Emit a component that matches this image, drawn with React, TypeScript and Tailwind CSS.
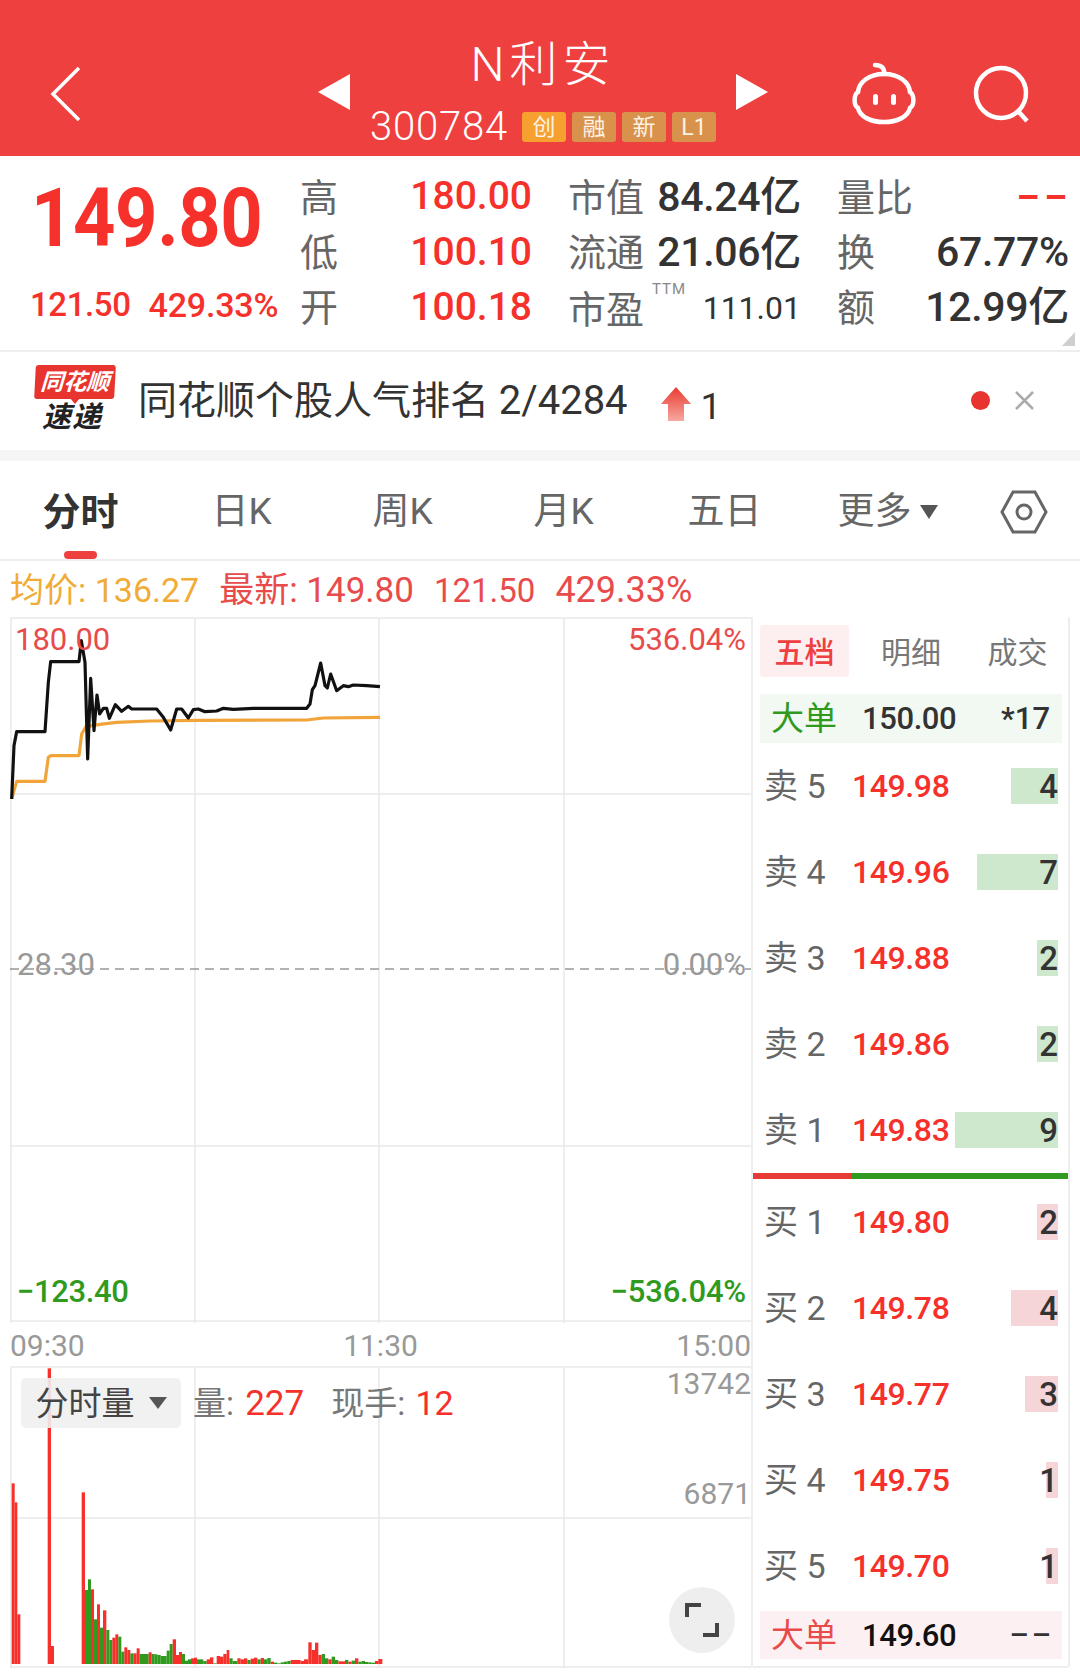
import React from 'react';

const FONT = 'font-["Roboto","Noto_Sans_CJK_SC",sans-serif]';

const blackLine = '35,540 42,380 50,338 135,338 145,190 152,128 237,128 244,65 255,130 263,420 272,178 282,335 291,228 299,285 310,268 320,268 328,298 346,257 365,277 385,262 395,270 470,270 490,295 512,333 530,270 545,270 565,297 580,272 595,270 615,278 650,276 670,268 700,271 760,268 920,268 930,255 937,212 945,200 962,132 975,200 982,207 992,165 1010,215 1030,200 1045,203 1060,198 1100,200 1140,203';
const avgLine = '35,540 50,487 135,487 145,415 152,410 237,410 245,345 258,323 300,316 350,310 450,306 600,304 920,303 970,297 1140,295';

// [x0, x1, top, red?]
const volumes: [number, number, number, number][] = [
  [35, 44, 430, 1], [44, 52, 487, 1], [52, 61, 823, 1], [143, 153, 85, 1], [153, 162, 918, 1], [245, 255, 457, 1],
  [255, 264, 750, 0], [264, 273, 718, 0], [273, 282, 748, 1], [282, 291, 838, 0], [291, 300, 793, 1], [300, 309, 863, 0],
  [309, 319, 811, 1], [319, 328, 870, 0], [328, 337, 900, 0], [337, 346, 893, 1], [346, 355, 883, 1], [355, 364, 890, 0],
  [364, 373, 935, 0], [373, 382, 922, 1], [382, 391, 930, 1], [391, 400, 940, 0], [400, 410, 940, 1], [410, 419, 925, 1],
  [419, 446, 942, 0], [446, 455, 937, 1], [455, 464, 942, 0], [464, 473, 943, 0], [473, 482, 945, 0], [482, 500, 948, 0],
  [500, 509, 932, 0], [509, 518, 912, 0], [518, 528, 898, 1], [528, 537, 945, 1], [537, 546, 936, 1], [546, 555, 942, 0],
  [555, 564, 962, 0], [564, 573, 958, 0], [573, 582, 955, 1], [582, 591, 953, 1], [591, 610, 958, 0], [610, 620, 963, 0],
  [620, 630, 958, 1], [630, 640, 952, 1], [640, 650, 970, 0], [650, 660, 948, 1], [660, 670, 950, 1], [670, 680, 942, 1],
  [680, 688, 930, 1], [688, 698, 955, 0], [698, 712, 963, 0], [712, 722, 955, 1], [722, 732, 958, 1], [732, 742, 955, 1],
  [742, 752, 960, 0], [752, 762, 956, 1], [762, 772, 953, 1], [772, 782, 958, 0], [782, 792, 954, 1], [792, 802, 958, 0],
  [802, 812, 954, 0], [812, 822, 965, 1], [822, 832, 968, 0], [832, 842, 970, 0], [842, 852, 967, 0], [852, 862, 965, 0],
  [862, 872, 963, 0], [872, 902, 960, 1], [902, 912, 963, 1], [912, 925, 958, 1], [925, 935, 907, 1], [935, 945, 930, 1],
  [945, 955, 908, 1], [955, 965, 945, 1], [965, 975, 942, 0], [975, 985, 955, 0], [985, 995, 958, 1], [995, 1005, 950, 0],
  [1005, 1015, 960, 0], [1015, 1035, 964, 1], [1035, 1045, 960, 0], [1045, 1055, 965, 1], [1055, 1065, 962, 0],
  [1065, 1075, 955, 1], [1075, 1085, 965, 0], [1085, 1095, 963, 0], [1095, 1105, 966, 0], [1105, 1115, 967, 0],
  [1115, 1125, 968, 0], [1125, 1135, 963, 1], [1135, 1147, 957, 1],
];

const sells = [
  { label: '卖 5', price: '149.98', qty: '4', bar: 47 },
  { label: '卖 4', price: '149.96', qty: '7', bar: 81 },
  { label: '卖 3', price: '149.88', qty: '2', bar: 21 },
  { label: '卖 2', price: '149.86', qty: '2', bar: 21 },
  { label: '卖 1', price: '149.83', qty: '9', bar: 103 },
];
const buys = [
  { label: '买 1', price: '149.80', qty: '2', bar: 21 },
  { label: '买 2', price: '149.78', qty: '4', bar: 47 },
  { label: '买 3', price: '149.77', qty: '3', bar: 33 },
  { label: '买 4', price: '149.75', qty: '1', bar: 12 },
  { label: '买 5', price: '149.70', qty: '1', bar: 12 },
];

function Label({ children }: { children: React.ReactNode }) {
  return <span className="text-[38px] leading-none text-[#666]">{children}</span>;
}

function Badge({ text, first }: { text: string; first?: boolean }) {
  return (
    <span className={`flex h-[30px] w-[44px] items-center justify-center rounded-[3px] text-[23px] leading-none text-[#fdf3e4] ${first ? 'bg-[#f5a02f]' : 'bg-[#d8924c]'}`}>
      {text}
    </span>
  );
}

function BookRow({ row, barColor }: { row: { label: string; price: string; qty: string; bar: number }; barColor: string }) {
  return (
    <div className="relative flex h-[86px] items-center pl-[11px]">
      <span className="w-[88px] text-[34px] leading-none text-[#666]">{row.label}</span>
      <span className="text-[32px] font-medium leading-none tracking-[-0.4px] text-[#f6302a]">{row.price}</span>
      <div className={`absolute right-[10px] top-[25px] h-[36px] ${barColor}`} style={{ width: row.bar }} />
      <span className="absolute right-[10px] text-[33px] font-medium leading-none text-[#333]">{row.qty}</span>
    </div>
  );
}

export default function App() {
  return (
    <div className={`h-[1678px] w-[1080px] overflow-hidden bg-white ${FONT}`}>
      {/* header */}
      <div className="flex h-[156px] bg-[#ef4040] text-white">
        <div className="flex w-[318px] items-start pl-[50px] pt-[66px]">
          <svg width="32" height="56" viewBox="0 0 32 56" fill="none" stroke="white" strokeWidth="3.5">
            <path d="M29 2 L3 28 L29 54" />
          </svg>
        </div>
        <div className="flex w-[450px] justify-between">
          <svg className="mt-[74px]" width="32" height="36" viewBox="0 0 32 36" fill="white"><path d="M32 0 V36 L0 18 Z" /></svg>
          <div className="flex flex-col items-center pt-[38px]">
            <div className="flex h-[54px] items-center text-[48px] font-light leading-none tracking-[5px]">N利安</div>
            <div className="mt-[16px] flex h-[38px] items-center">
              <span className="mr-[14px] text-[40px] font-light leading-none tracking-[0.8px]">300784</span>
              <div className="flex gap-[6px]">
                <Badge text="创" first />
                <Badge text="融" />
                <Badge text="新" />
                <Badge text="L1" />
              </div>
            </div>
          </div>
          <svg className="mt-[74px]" width="32" height="36" viewBox="0 0 32 36" fill="white"><path d="M0 0 V36 L32 18 Z" /></svg>
        </div>
        <div className="flex items-start pl-[83px] pt-[62px]">
          <svg width="66" height="64" viewBox="0 0 66 64" fill="none" stroke="white" strokeWidth="4.5">
            <path d="M24 3 C30 3 34 6 33 12" strokeLinecap="round" />
            <path d="M33 12 C48 12 58 20 59 30 C63 32 64 43 59 46 C57 55 46 60 33 60 C20 60 9 55 7 46 C2 43 3 32 7 30 C8 20 18 12 33 12 Z" />
            <rect x="22" y="32" width="5" height="11" rx="2.5" fill="white" stroke="none" />
            <rect x="40" y="32" width="5" height="11" rx="2.5" fill="white" stroke="none" />
          </svg>
          <svg className="ml-[55px] mt-[3px]" width="60" height="60" viewBox="0 0 60 60" fill="none" stroke="white" strokeWidth="4.5">
            <circle cx="29" cy="28" r="25" />
            <path d="M46 46 L55 56" />
          </svg>
        </div>
      </div>

      {/* quote */}
      <div className="relative flex h-[196px] border-b-2 border-[#eeeeee] pt-[14px]">
        <div className="flex w-[300px] flex-col pl-[30px]">
          <div className="ml-[1px] mt-[11px] origin-center scale-y-110 text-[74px] font-bold leading-[74px] tracking-[-0.4px] text-[#f6302a]">149.80</div>
          <div className="mt-[33px] flex gap-[20px] text-[33px] font-medium leading-none tracking-[-0.4px] text-[#f6302a]">
            <span>121.50</span>
            <span className="-ml-[2px] text-[34px] tracking-[-0.2px]">429.33%</span>
          </div>
        </div>
        <div className="grid h-[165px] grid-cols-[232px_233px_232px] grid-rows-3 gap-x-[36px]">
          <div className="flex items-center justify-between"><Label>高</Label><span className="-translate-y-px text-[39px] font-medium leading-none text-[#f6302a]">180.00</span></div>
          <div className="flex items-center justify-between"><Label>市值</Label><span className="text-[41px] font-medium leading-none tracking-[-0.3px] text-[#333]">84.24亿</span></div>
          <div className="flex items-center justify-between"><Label>量比</Label><span className="-mr-[3px] text-[36px] font-bold leading-none tracking-[5px] text-[#f6302a]">––</span></div>
          <div className="flex items-center justify-between"><Label>低</Label><span className="text-[39px] font-medium leading-none text-[#f6302a]">100.10</span></div>
          <div className="flex items-center justify-between"><Label>流通</Label><span className="text-[41px] font-medium leading-none tracking-[-0.3px] text-[#333]">21.06亿</span></div>
          <div className="flex items-center justify-between"><Label>换</Label><span className="text-[41px] font-medium leading-none tracking-[-0.3px] text-[#333]">67.77%</span></div>
          <div className="flex items-center justify-between"><Label>开</Label><span className="text-[39px] font-medium leading-none text-[#f6302a]">100.18</span></div>
          <div className="flex items-center justify-between">
            <div className="flex items-start">
              <span className="mt-[6px]"><Label>市盈</Label></span>
              <span className="ml-[8px] mt-[-3px] text-[15px] leading-none tracking-[1px] text-[#888]">TTM</span>
            </div>
            <span className="text-[32px] leading-none text-[#333]">111.01</span>
          </div>
          <div className="flex items-center justify-between"><Label>额</Label><span className="text-[41px] font-medium leading-none tracking-[-0.3px] text-[#333]">12.99亿</span></div>
        </div>
        <svg className="absolute bottom-[4px] right-[5px]" width="13" height="14" viewBox="0 0 13 14" fill="#cfcfcf"><path d="M13 0 V14 H0 Z" /></svg>
      </div>

      {/* rank */}
      <div className="flex h-[98px] items-center">
        <div className="relative ml-[34px] flex h-[72px] w-[82px] flex-col items-center">
          <div className="flex h-[34px] w-[80px] -skew-x-3 items-center justify-center rounded-[3px] bg-[#e8342e] text-[23px] font-bold italic leading-none text-white">同花顺</div>
          <svg className="-mt-[1px]" width="10" height="6" viewBox="0 0 10 6" fill="#e8342e"><path d="M0 0 H10 L5 6 Z" /></svg>
          <div className="-ml-[6px] -mt-[3px] text-[29px] font-bold italic leading-[32px] tracking-[1px] text-[#222]">速递</div>
        </div>
        <span className="ml-[22px] text-[39px] leading-none text-[#333]">同花顺个股人气排名 <span className="text-[40px]">2/4284</span></span>
        <svg className="ml-[33px] mt-[6px]" width="30" height="34" viewBox="0 0 30 34">
          <defs>
            <linearGradient id="rankUp" x1="0" y1="0" x2="0" y2="1">
              <stop offset="0%" stopColor="#ea3a30" />
              <stop offset="100%" stopColor="#f7a8a0" />
            </linearGradient>
          </defs>
          <path d="M15 0 L30 17 H23 V34 H7 V17 H0 Z" fill="url(#rankUp)" />
        </svg>
        <span className="ml-[10px] mt-[10px] text-[37px] leading-none text-[#333]">1</span>
        <div className="ml-auto mr-[45px] flex -translate-y-px items-center gap-[24px]">
          <div className="h-[19px] w-[19px] rounded-full bg-[#e8342e]" />
          <svg width="21" height="21" viewBox="0 0 21 21" stroke="#aaa" strokeWidth="2.5"><path d="M2 2 L19 19 M19 2 L2 19" /></svg>
        </div>
      </div>
      <div className="h-[11px] bg-[#f5f5f5]" />

      {/* tabs */}
      <div className="relative flex h-[100px] items-center border-b-2 border-[#eeeeee] pt-[3px] text-[37px] leading-none text-[#666]">
        <div className="flex w-[161px] justify-center text-[38px] font-bold text-[#333]">分时</div>
        <div className="flex w-[161px] justify-center">日K</div>
        <div className="flex w-[161px] justify-center">周K</div>
        <div className="flex w-[161px] justify-center">月K</div>
        <div className="flex w-[161px] justify-center">五日</div>
        <div className="flex w-[161px] items-center justify-center pl-[4px]">
          更多
          <svg className="ml-[8px]" width="18" height="14" viewBox="0 0 18 14" fill="#555"><path d="M0 0 H18 L9 14 Z" /></svg>
        </div>
        <div className="flex flex-1 justify-center pl-[2px]">
          <svg width="48" height="44" viewBox="0 0 48 44" fill="none" stroke="#666" strokeWidth="3">
            <path d="M13 2 H35 L46 22 L35 42 H13 L2 22 Z" />
            <circle cx="24" cy="22" r="7" />
          </svg>
        </div>
        <div className="absolute bottom-0 left-[64px] h-[8px] w-[33px] rounded-[4px] bg-[#ef4040]" />
      </div>

      {/* info */}
      <div className="flex h-[56px] items-center pl-[10px] pt-[2px] leading-none text-[#e84b4b]">
        <span className="text-[34px] text-[#f0ac36]">均价: 136.27</span>
        <span className="ml-[20px] text-[35px]">最新: 149.80</span>
        <span className="ml-[20px] text-[33px]">121.50</span>
        <span className="ml-[20px] text-[36px]">429.33%</span>
      </div>

      {/* chart + order book */}
      <div className="flex">
        <div className="w-[751px] pl-[10px]">
          <div className="relative h-[704px] w-[741px] border-t-2 border-[#eeeeee]">
            <svg className="absolute left-0 top-0" width="741" height="704" fill="none" stroke="#e9e9e9" strokeWidth="1.5">
              <path d="M1 0 V704 M185 0 V704 M369 0 V704 M554 0 V704 M0 175 H741 M0 527 H741 M0 702 H741" />
              <path d="M0 350 H741" stroke="#666" strokeDasharray="9 6" strokeWidth="1.2" />
            </svg>
            <svg className="absolute left-[-10px] top-0" width="400" height="180" viewBox="0 0 1200 540" fill="none" strokeWidth="9.5" strokeLinejoin="round">
              <polyline points={avgLine} stroke="#f0a43a" />
              <polyline points={blackLine} stroke="#111" />
            </svg>
            <span className="absolute left-[5px] top-[3px] text-[31px] leading-[36px] text-[#e84b4b]">180.00</span>
            <span className="absolute right-[5px] top-[3px] text-[31px] leading-[36px] text-[#e84b4b]">536.04%</span>
            <span className="absolute left-[7px] top-[328px] text-[31px] leading-[36px] text-[#999]">28.30</span>
            <span className="absolute right-[5px] top-[328px] text-[31px] leading-[36px] text-[#999]">0.00%</span>
            <span className="absolute left-[7px] top-[655px] text-[31px] font-medium leading-[36px] tracking-[-0.4px] text-[#2f9a1e]">−123.40</span>
            <span className="absolute right-[5px] top-[655px] text-[31px] font-medium leading-[36px] tracking-[-0.2px] text-[#2f9a1e]">−536.04%</span>
          </div>
          <div className="flex h-[45px] w-[741px] items-center justify-between pt-[5px] text-[30px] leading-none text-[#999]">
            <span>09:30</span>
            <span>11:30</span>
            <span>15:00</span>
          </div>
          <div className="relative h-[302px] w-[741px] border-t-2 border-[#eeeeee]">
            <svg className="absolute left-0 top-0" width="741" height="302" fill="none" stroke="#e9e9e9" strokeWidth="1.5">
              <path d="M1 0 V300 M185 0 V300 M369 0 V300 M554 0 V300 M0 150 H741 M0 299 H741" />
            </svg>
            <svg className="absolute left-[-10px] top-[-28px]" width="400" height="338" viewBox="0 0 1200 1014">
              {volumes.map(([x0, x1, top, red]) => (
                <rect key={x0} x={x0} y={top} width={x1 - x0} height={972 - top} fill={red ? '#f6302a' : '#2f9a1e'} />
              ))}
            </svg>
            <div className="absolute left-[11px] top-[10px] flex items-center">
              <div className="flex h-[50px] w-[160px] items-center justify-center rounded-[5px] bg-[#f0f0f0]/90 text-[33px] leading-none text-[#444]">
                分时量
                <svg className="ml-[14px]" width="18" height="12" viewBox="0 0 18 12" fill="#555"><path d="M0 0 H18 L9 12 Z" /></svg>
              </div>
              <span className="ml-[12px] text-[33px] leading-none text-[#777]">量: <span className="ml-[3px] text-[35px] text-[#f6302a]">227</span></span>
              <span className="ml-[27px] text-[33px] leading-none text-[#777]">现手: <span className="ml-[2px] text-[34px] text-[#f6302a]">12</span></span>
            </div>
            <span className="absolute right-0 top-[0px] text-[30px] leading-[32px] text-[#999]">13742</span>
            <span className="absolute right-0 top-[110px] text-[30px] leading-[32px] text-[#999]">6871</span>
            <div className="absolute left-[659px] top-[219px] flex h-[66px] w-[66px] items-center justify-center rounded-full bg-[#eeeeee]">
              <svg width="34" height="34" viewBox="0 0 34 34" fill="none" stroke="#444" strokeWidth="4">
                <path d="M2 14 V2 H16 M32 20 V32 H18" />
              </svg>
            </div>
          </div>
        </div>

        <div className="h-[1050px] w-[319px] border-x-2 border-[#eeeeee]">
          <div className="mt-[8px] flex h-[52px] items-center pl-[7px] text-[30px] leading-none text-[#777]">
            <div className="flex h-[52px] w-[89px] items-center justify-center rounded-[3px] bg-[#fdeff0] pt-[3px] font-medium text-[#ee4040]">五档</div>
            <div className="flex w-[124px] justify-center pt-[3px]">明细</div>
            <div className="flex w-[89px] justify-center pt-[3px]">成交</div>
          </div>
          <div className="ml-[7px] mr-[6px] mt-[17px] flex h-[49px] items-center bg-[#f2f9f2] pl-[11px] pr-[12px]">
            <span className="w-[91px] text-[33px] leading-none text-[#2f9a1e]">大单</span>
            <span className="text-[31px] font-medium leading-none tracking-[-0.4px] text-[#333]">150.00</span>
            <span className="ml-auto text-[31px] font-medium leading-none text-[#333]">*17</span>
          </div>
          {sells.map((row) => <BookRow key={row.label} row={row} barColor="bg-[#cde8cc]" />)}
          <div className="flex h-[6px]">
            <div className="w-[98px] bg-[#e83a36]" />
            <div className="flex-1 bg-[#2f9a1e]" />
          </div>
          {buys.map((row) => <BookRow key={row.label} row={row} barColor="bg-[#f6d5d8]" />)}
          <div className="ml-[7px] mr-[6px] mt-[2px] flex h-[48px] items-center bg-[#fdf0f2] pl-[11px] pr-[12px]">
            <span className="w-[91px] text-[33px] leading-none text-[#e84b4b]">大单</span>
            <span className="text-[31px] font-medium leading-none tracking-[-0.4px] text-[#111]">149.60</span>
            <span className="-mr-[4px] ml-auto text-[30px] font-medium leading-none tracking-[3px] text-[#333]">––</span>
          </div>
          <div className="mt-[7px] h-[2px] bg-[#eeeeee]" />
        </div>
      </div>
    </div>
  );
}
